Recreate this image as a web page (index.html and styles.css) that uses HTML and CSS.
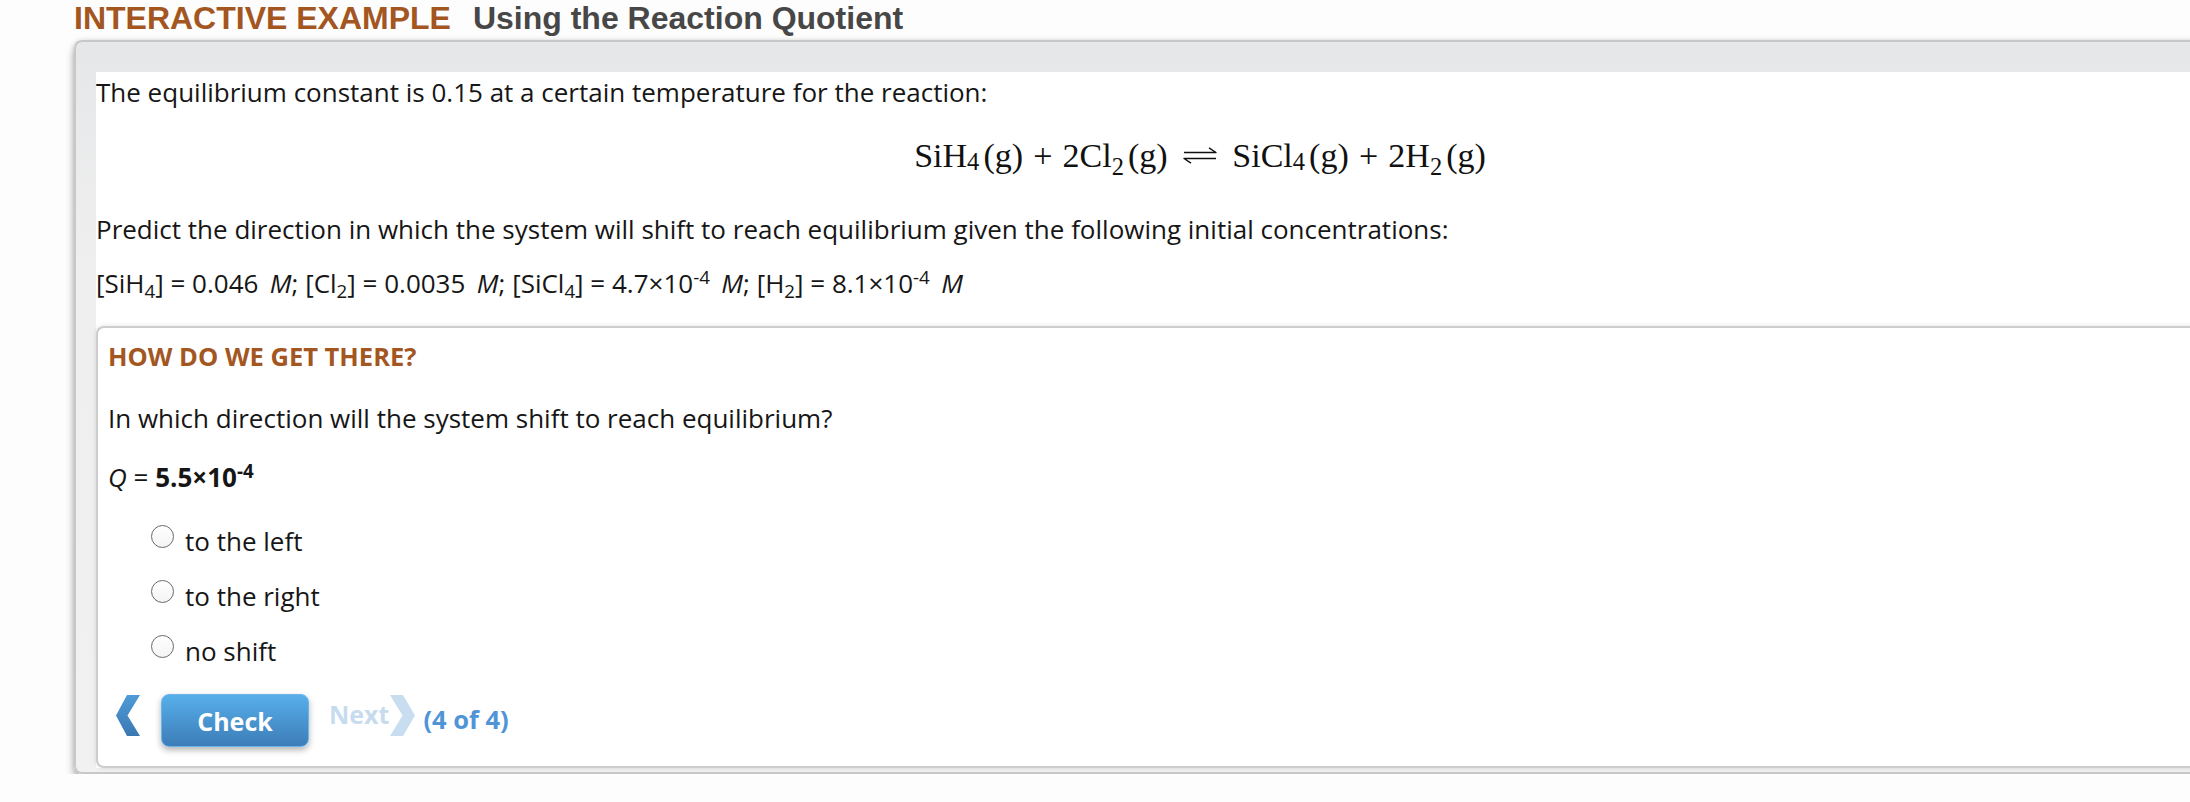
FILE: index.html
```html
<!DOCTYPE html>
<html>
<head>
<meta charset="utf-8">
<link rel="stylesheet" href="styles.css">
</head>
<body>
<div class="page">
  <h1 class="title"><span class="kicker">INTERACTIVE EXAMPLE</span><span class="name">Using the Reaction Quotient</span></h1>
  <div class="panel">
    <div class="content">
      <p class="text lead">The equilibrium constant is 0.15 at a certain temperature for the reaction:</p>
      <div class="eq">
        <span>SiH<span class="sa">4</span></span><span class="ph">(g)</span><span class="op">+</span><span>2Cl<span class="sb">2</span></span><span class="ph">(g)</span><span class="arrow"><svg width="34" height="17" viewBox="0 0 34 17"><path d="M1 5.5 H33 L26 0.8" fill="none" stroke="#111" stroke-width="1.4" stroke-linejoin="round"/><path d="M33 11.5 H1 L8 16.2" fill="none" stroke="#111" stroke-width="1.4" stroke-linejoin="round"/></svg></span><span>SiCl<span class="sa">4</span></span><span class="ph">(g)</span><span class="op">+</span><span>2H<span class="sb">2</span></span><span class="ph">(g)</span>
      </div>
      <p class="text predict">Predict the direction in which the system will shift to reach equilibrium given the following initial concentrations:</p>
      <p class="text conc">[SiH<sub>4</sub>] = 0.046 <i class="unit">M</i>; [Cl<sub>2</sub>] = 0.0035 <i class="unit">M</i>; [SiCl<sub>4</sub>] = 4.7×10<sup>-4</sup> <i class="unit">M</i>; [H<sub>2</sub>] = 8.1×10<sup>-4</sup> <i class="unit">M</i></p>
      <div class="how">
        <h2 class="how-title">HOW DO WE GET THERE?</h2>
        <p class="text q1">In which direction will the system shift to reach equilibrium?</p>
        <p class="text qval"><i>Q</i> = <b>5.5×10<sup>-4</sup></b></p>
        <div class="options">
          <label class="opt"><span class="radio"></span><span class="text">to the left</span></label>
          <label class="opt"><span class="radio"></span><span class="text">to the right</span></label>
          <label class="opt"><span class="radio"></span><span class="text">no shift</span></label>
        </div>
        <div class="nav">
          <svg class="chev-left" width="24" height="41" viewBox="0 0 24 41">
            <defs><linearGradient id="gl" x1="0" y1="0" x2="0" y2="1"><stop offset="0" stop-color="#4f9bd8"/><stop offset="1" stop-color="#3a78b2"/></linearGradient></defs>
            <polygon points="11,0 24,0 11.5,20.5 24,41 11,41 0,20.5" fill="url(#gl)"/>
          </svg>
          <button class="check">Check</button>
          <span class="next">Next</span>
          <svg class="chev-right" width="25" height="41" viewBox="0 0 25 41">
            <polygon points="0,0 13,0 25,20.5 13,41 0,41 12.5,20.5" fill="#c8def0"/>
          </svg>
          <span class="count">(4 of 4)</span>
        </div>
      </div>
    </div>
  </div>
</div>
</body>
</html>
```
FILE: styles.css
```css
html, body {
  margin: 0;
  padding: 0;
  background: #fdfdfd;
  overflow: hidden;
}
.page {
  width: 2500px;
  padding-left: 74px;
}
.title {
  margin: 0;
  height: 36px;
  font: 700 32px/36px "Liberation Sans", Arial, sans-serif;
  white-space: nowrap;
}
.kicker { color: #a3561f; }
.name { color: #474747; margin-left: 22px; }

.panel {
  margin-top: 4px;
  width: 2300px;
  border: 2px solid #c8c8c8;
  border-right: none;
  border-radius: 8px 0 0 8px;
  background: linear-gradient(#e6e7e9, #efefef 30%, #f1f1f1);
  padding: 30px 0 4px 20px;
  box-shadow: 0 0 5px rgba(0,0,0,0.12), 0 6px 9px rgba(0,0,0,0.32);
}
.content {
  background: #fff;
  width: 2208px;
  padding-top: 3px;
}
.text {
  font: 400 26px/34px "Open Sans", "Noto Sans", sans-serif;
  color: #161616;
  margin: 0;
  white-space: nowrap;
}
.text sub, .text sup {
  font-size: 0.72em;
  line-height: 0;
}
.text sub { vertical-align: -0.28em; }
.text sup { vertical-align: 0.5em; }
.unit { margin-left: 0.18em; }

.eq {
  margin-top: 27px;
  font: 400 34px/40px "Liberation Serif", "Times New Roman", serif;
  color: #111;
  text-align: center;
  white-space: nowrap;
}
.eq .sa { font-size: 0.72em; vertical-align: -0.12em; line-height: 0; }
.eq .sb { font-size: 0.72em; vertical-align: -0.32em; line-height: 0; }
.eq .ph { margin-left: 0.12em; }
.eq .op { margin: 0 0.3em; }
.eq .arrow { display: inline-block; margin: 0 0.45em; vertical-align: 0.1em; line-height: 0; }

.predict { margin-top: 36px; }
.conc { margin-top: 20px; }

.how {
  margin-top: 26px;
  border: 2px solid #cdcdcd;
  border-right: none;
  border-radius: 8px 0 0 8px;
  padding: 11px 0 19px 10px;
  box-shadow: 0 0 5px rgba(0,0,0,0.12);
  background: #fff;
}
.how-title {
  margin: 0;
  font: 700 25.5px/34px "Open Sans", "Noto Sans", sans-serif;
  color: #a3561f;
}
.q1 { margin-top: 28px; }
.qval { margin-top: 25px; }
.qval b { font-weight: 700; }

.options {
  margin-top: 30px;
  display: flex;
  flex-direction: column;
  gap: 21px;
  padding-left: 43px;
}
.opt {
  display: flex;
  align-items: flex-start;
  gap: 11px;
}
.radio {
  width: 21px;
  height: 21px;
  margin-top: 1px;
  border: 1.6px solid #6a6a6a;
  border-radius: 50%;
  background: linear-gradient(#fff, #f4f4f4);
  flex: none;
}

.nav {
  margin-top: 26px;
  display: flex;
  align-items: flex-start;
  padding-left: 8px;
  height: 53px;
}
.chev-left { margin-top: 1px; flex: none; }
.check {
  margin-left: 21px;
  width: 148px;
  height: 53px;
  border: 1.5px solid #6cb5ea;
  border-radius: 8px;
  background: linear-gradient(#57afea, #3c7db8);
  color: #fff;
  font: 700 25px/34px "Open Sans", "Noto Sans", sans-serif;
  padding: 0;
  box-shadow: 0 3px 6px rgba(0,0,0,0.3);
}
.next {
  margin-left: 20px;
  margin-top: 3px;
  font: 700 25px/34px "Open Sans", "Noto Sans", sans-serif;
  color: #c6dcee;
}
.chev-right { margin-left: 1px; margin-top: 1px; flex: none; }
.count {
  margin-left: 8px;
  margin-top: 8px;
  font: 700 25.5px/34px "Open Sans", "Noto Sans", sans-serif;
  color: #4f95d6;
}
```
